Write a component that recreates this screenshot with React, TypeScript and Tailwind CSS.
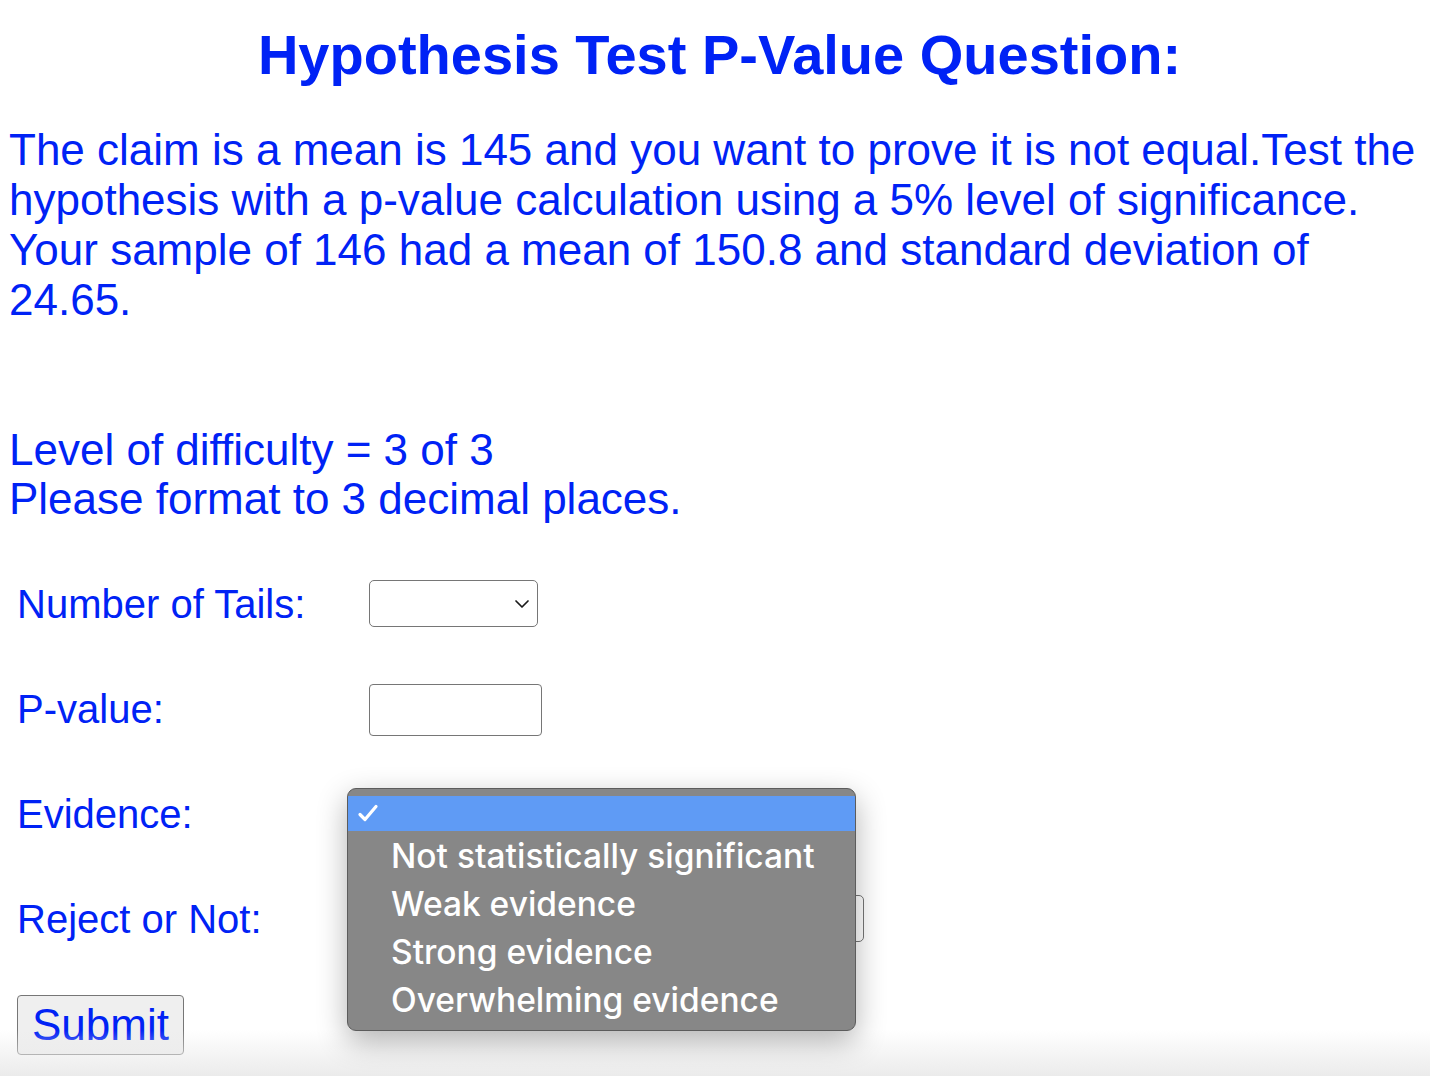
import React from "react";

function Chevron() {
  return (
    <svg width="16" height="10" viewBox="0 0 16 10" className="pointer-events-none absolute right-[8px] top-1/2 -translate-y-1/2">
      <path d="M2 2 L8 8 L14 2" fill="none" stroke="#1a1a1a" strokeWidth="1.7" strokeLinecap="round" strokeLinejoin="round" />
    </svg>
  );
}

export default function App() {
  const blue = "text-[#0022f5]";
  return (
    <div className={`relative h-[1076px] w-full overflow-hidden bg-white font-['Liberation_Sans',Arial,sans-serif] ${blue}`}>
      <div className="px-[9px]">
        <h1 className="mt-[22px] pl-[9px] text-center text-[56px] font-bold leading-[66px]">Hypothesis Test P-Value Question:</h1>
        <p className="mt-[37px] whitespace-nowrap text-[44px] leading-[50px]">
          The claim is a mean is 145 and you want to prove it is not equal.Test the
          <br />
          hypothesis with a p-value calculation using a 5% level of significance.
          <br />
          Your sample of 146 had a mean of 150.8 and standard deviation of
          <br />
          24.65.
        </p>
        <div className="mt-[100px] whitespace-nowrap text-[44px] leading-[49px]">
          <div>Level of difficulty = 3 of 3</div>
          <div>Please format to 3 decimal places.</div>
        </div>
        <div className="mt-[28px] grid grid-cols-[360px_1fr] text-[40px]">
          <div className="flex h-[105px] items-center pl-[8px]">Number of Tails:</div>
          <div className="flex h-[105px] items-center">
            <div className="relative flex">
              <select className="block h-[47px] w-[169px] appearance-none rounded-[5px] border-[1.5px] border-[#767676] bg-white" defaultValue="">
                <option value=""></option>
              </select>
              <Chevron />
            </div>
          </div>
          <div className="flex h-[105px] items-center pl-[8px]">P-value:</div>
          <div className="flex h-[105px] items-center pt-[2px]">
            <input className="block h-[52px] w-[173px] rounded-[4px] border-[1.5px] border-[#767676] bg-white" />
          </div>
          <div className="flex h-[105px] items-center pl-[8px]">Evidence:</div>
          <div className="flex h-[105px] items-center">
            <div className="relative flex">
              <select className="block h-[47px] w-[470px] appearance-none rounded-[5px] border-[1.5px] border-[#767676] bg-white" defaultValue="">
                <option value=""></option>
              </select>
            </div>
          </div>
          <div className="flex h-[105px] items-center pl-[8px]">Reject or Not:</div>
          <div className="flex h-[105px] items-center">
            <div className="relative flex">
              <select className="block h-[47px] w-[495px] appearance-none rounded-[5px] border-[1.5px] border-[#767676] bg-white" defaultValue="">
                <option value=""></option>
              </select>
            </div>
          </div>
        </div>
        <button className="ml-[8px] mt-[24px] flex h-[60px] w-[167px] items-center justify-center rounded-[4px] border-[1.5px] border-[#767676] bg-[#efefef] text-[44px] leading-none">
          Submit
        </button>
      </div>

      <div className="pointer-events-none absolute bottom-0 left-0 right-0 h-[46px] bg-linear-to-b from-white/0 to-[#ebebeb]" />

      <div className="absolute left-[347px] top-[788px] w-[509px] overflow-hidden rounded-[9px] border border-[#5c5c5c] bg-[#878787] pb-[7px] pt-[7px] font-['Inter','Noto_Sans',sans-serif] text-white shadow-[0_10px_30px_rgba(0,0,0,0.3)]">
        <div className="flex h-[35px] items-center bg-[#5f9bf5] pl-[9px]">
          <svg width="22" height="20" viewBox="0 0 22 20" className="block shrink-0">
            <path d="M3 10.5 L8 15.5 L19 2.5" fill="none" stroke="white" strokeWidth="3.2" strokeLinecap="round" strokeLinejoin="round" />
          </svg>
        </div>
        {["Not statistically significant", "Weak evidence", "Strong evidence", "Overwhelming evidence"].map((t) => (
          <div key={t} className="flex h-[48px] items-center whitespace-nowrap pl-[43px] pt-[3px] text-[33.5px] font-medium leading-none">
            {t}
          </div>
        ))}
      </div>
    </div>
  );
}
